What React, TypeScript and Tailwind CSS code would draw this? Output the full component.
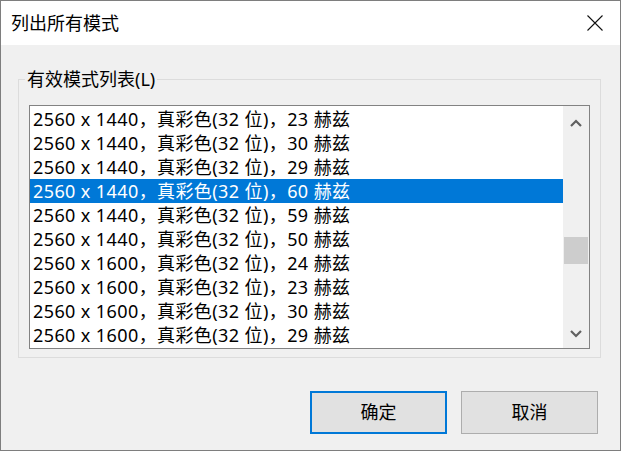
import React from "react";

const modes = [
  { res: "2560 x 1440", hz: 23 },
  { res: "2560 x 1440", hz: 30 },
  { res: "2560 x 1440", hz: 29 },
  { res: "2560 x 1440", hz: 60 },
  { res: "2560 x 1440", hz: 59 },
  { res: "2560 x 1440", hz: 50 },
  { res: "2560 x 1600", hz: 24 },
  { res: "2560 x 1600", hz: 23 },
  { res: "2560 x 1600", hz: 30 },
  { res: "2560 x 1600", hz: 29 },
];

const selected = 3;

function Chevron({ down = false }: { down?: boolean }) {
  return (
    <svg width="12" height="8" viewBox="0 0 12 8" className={down ? "rotate-180" : ""}>
      <polyline points="1,7 6,2 11,7" fill="none" stroke="#606060" strokeWidth="2.2" />
    </svg>
  );
}

export default function App() {
  return (
    <div
      className="w-[621px] h-[451px] border border-[#7e7e7e] bg-[#f0f0f0] flex flex-col text-black"
      style={{ fontFamily: '"Noto Sans", "Noto Sans CJK SC", sans-serif' }}
    >
      {/* Title bar */}
      <div className="h-[44px] bg-white flex items-center justify-between pl-[10px] pr-[17px] shrink-0">
        <span className="text-[18px] leading-none">列出所有模式</span>
        <svg width="16" height="16" viewBox="0 0 16 16">
          <path d="M0.5 0.5 L15.5 15.5 M15.5 0.5 L0.5 15.5" stroke="#111" strokeWidth="1.1" fill="none" />
        </svg>
      </div>

      {/* Group box */}
      <div className="px-[17px] pr-[19px] mt-[22px]">
        <fieldset className="border border-[#dcdcdc] px-[10px] pb-[8px]">
          <legend className="-ml-[4px] px-[2px] text-[18px] leading-[24px]">有效模式列表(L)</legend>
          <div className="mt-[14px] h-[244px] border border-[#828282] bg-white flex">
            <div className="flex-1 pt-[1px] overflow-hidden">
              {modes.map((m, i) => (
                <div
                  key={i}
                  className={
                    "h-[24px] pl-[3px] text-[18px] leading-[24px] tracking-[0.4px] whitespace-nowrap " +
                    (i === selected ? "bg-[#0078d7] text-white" : "")
                  }
                >
                  {m.res}，真彩色(32 位)，{m.hz} 赫兹
                </div>
              ))}
            </div>
            {/* Scrollbar */}
            <div className="w-[26px] bg-[#f0f0f0] flex flex-col">
              <div className="h-[34px] flex items-center justify-center">
                <Chevron />
              </div>
              <div className="flex-1 px-[1px]">
                <div className="mt-[97px] h-[27px] bg-[#cdcdcd]" />
              </div>
              <div className="h-[28px] flex items-center justify-center">
                <Chevron down />
              </div>
            </div>
          </div>
        </fieldset>
      </div>

      {/* Buttons */}
      <div className="flex justify-end gap-[14px] pr-[22px] mt-[33px]">
        <button className="w-[137px] h-[43px] bg-[#e1e1e1] border-2 border-[#0078d7] text-[18px]">
          确定
        </button>
        <button className="w-[137px] h-[43px] bg-[#e1e1e1] border border-[#adadad] text-[18px]">
          取消
        </button>
      </div>
    </div>
  );
}
